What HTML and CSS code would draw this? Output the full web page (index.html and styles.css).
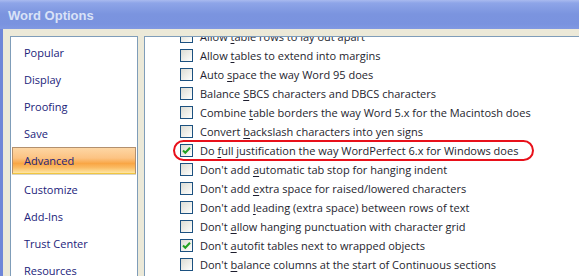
FILE: index.html
```html
<!DOCTYPE html>
<html>
<head>
<meta charset="utf-8">
<link rel="stylesheet" href="styles.css">
</head>
<body>
<div class="window">
  <div class="titlebar"><span class="title">Word Options</span></div>
  <div class="content">
    <ul class="nav">
      <li class="nav-item">Popular</li>
      <li class="nav-item">Display</li>
      <li class="nav-item">Proofing</li>
      <li class="nav-item">Save</li>
      <li class="nav-item active">Advanced</li>
      <li class="nav-item">Customize</li>
      <li class="nav-item">Add-Ins</li>
      <li class="nav-item">Trust Center</li>
      <li class="nav-item">Resources</li>
    </ul>
    <div class="panel">
      <ul class="options">
        <li class="opt"><span class="box"></span><span class="label">Allow <u>t</u>able rows to lay out apart</span></li>
        <li class="opt"><span class="box"></span><span class="label">Allow <u>t</u>ables to extend into margins</span></li>
        <li class="opt"><span class="box"></span><span class="label">Auto <u>s</u>pace the way Word 95 does</span></li>
        <li class="opt"><span class="box"></span><span class="label">Balance <u>S</u>BCS characters and DBCS characters</span></li>
        <li class="opt"><span class="box"></span><span class="label">Combine <u>t</u>able borders the way Word 5.x for the Macintosh does</span></li>
        <li class="opt"><span class="box"></span><span class="label">Convert <u>b</u>ackslash characters into yen signs</span></li>
        <li class="opt circled"><span class="box"><svg class="check" viewBox="0 0 11 11" width="11" height="11"><path d="M2 5.5 L4.3 7.8 L9 2.8" fill="none" stroke="#21a121" stroke-width="2"/></svg></span><span class="label">Do <u>f</u>ull justification the way WordPerfect 6.x for Windows does</span></li>
        <li class="opt"><span class="box"></span><span class="label">Don't add <u>a</u>utomatic tab stop for hanging indent</span></li>
        <li class="opt"><span class="box"></span><span class="label">Don't add <u>e</u>xtra space for raised/lowered characters</span></li>
        <li class="opt"><span class="box"></span><span class="label">Don't add <u>l</u>eading (extra space) between rows of text</span></li>
        <li class="opt"><span class="box"></span><span class="label">Don't <u>a</u>llow hanging punctuation with character grid</span></li>
        <li class="opt"><span class="box"><svg class="check" viewBox="0 0 11 11" width="11" height="11"><path d="M2 5.5 L4.3 7.8 L9 2.8" fill="none" stroke="#21a121" stroke-width="2"/></svg></span><span class="label">Don't <u>a</u>utofit tables next to wrapped objects</span></li>
        <li class="opt"><span class="box"></span><span class="label">Don't <u>b</u>alance columns at the start of Continuous sections</span></li>
      </ul>
    </div>
  </div>
</div>
</body>
</html>
```
FILE: styles.css
```css
html, body {
  margin: 0;
  padding: 0;
  width: 579px;
  height: 276px;
  overflow: hidden;
  background: #ece9d8;
}
.window {
  height: 276px;
  border-left: 3px solid #6f86d8;
  display: flex;
  flex-direction: column;
}
.titlebar {
  height: 29px;
  margin-left: -3px;
  background: linear-gradient(#a9baef 0px, #8ea5e8 3px, #7b94df 14px, #7a93df 24px, #8199e2 29px);
  display: flex;
  align-items: center;
  padding-left: 8px;
  box-sizing: border-box;
}
.title {
  font-family: "Liberation Sans", Arial, sans-serif;
  font-weight: bold;
  font-size: 13px;
  color: #d9e2f7;
  padding-top: 2px;
}
.content {
  flex: 1;
  display: flex;
  gap: 6px;
  padding: 7px 0 0 7px;
  min-height: 0;
}
.nav {
  list-style: none;
  margin: 0;
  padding: 2px 1px 0 1px;
  width: 124px;
  flex: none;
  background: #fff;
  border: 1px solid #7f9db9;
  border-bottom: none;
  font-family: "Open Sans", sans-serif;
  font-size: 11px;
  color: #22237a;
}
.nav-item {
  height: 27px;
  line-height: 27px;
  padding-left: 12px;
  box-sizing: border-box;
}
.nav-item.active {
  padding-left: 11px;
  line-height: 25px;
  margin-bottom: 2px;
  border: 1px solid #b3906e;
  border-bottom-color: #f2c640;
  background: linear-gradient(#fdd6a4 0%, #fcc383 40%, #f9a645 62%, #fbbb63 78%, #fee6a2 100%);
  box-shadow: 0 1px 0 #d6d3c6;
}
.panel {
  flex: 1;
  background: #fff;
  border: 1px solid #7f9db9;
  border-right: none;
  border-bottom: none;
  overflow: hidden;
}
.options {
  list-style: none;
  margin: -10px 0 0 0;
  padding: 0 0 0 35px;
  font-family: "Open Sans", sans-serif;
  font-size: 11px;
  color: #1e1e2e;
}
.opt {
  height: 19px;
  display: flex;
  align-items: center;
  gap: 7px;
  white-space: nowrap;
}
.opt.circled {
  position: relative;
}
.opt.circled::after {
  content: "";
  position: absolute;
  left: -7px;
  top: -1px;
  width: 357px;
  height: 17px;
  border: 2px solid #e8101a;
  border-radius: 11px;
}
.box {
  width: 11px;
  height: 11px;
  flex: none;
  border: 1px solid #1c5180;
  background: linear-gradient(135deg, #dcdcd4 0%, #f4f4f0 70%, #ffffff 100%);
  display: flex;
  align-items: center;
  justify-content: center;
}
.check {
  display: block;
}
.label u {
  text-decoration-thickness: 1px;
  text-underline-offset: 2px;
}
```
